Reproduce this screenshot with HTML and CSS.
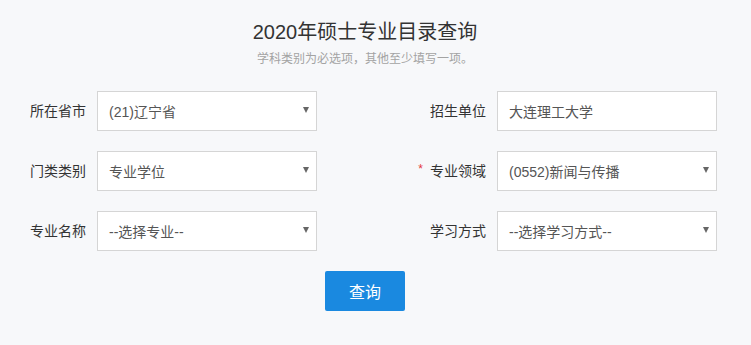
FILE: index.html
```html
<!DOCTYPE html>
<html lang="zh-CN">
<head>
<meta charset="utf-8">
<title>2020年硕士专业目录查询</title>
<link rel="stylesheet" href="styles.css">
</head>
<body>
<div class="page">
  <h1 class="title">2020年硕士专业目录查询</h1>
  <p class="subtitle">学科类别为必选项，其他至少填写一项。</p>
  <form class="form">
    <div class="row">
      <div class="field">
        <label class="label">所在省市</label>
        <div class="select"><span class="value">(21)辽宁省</span><span class="arrow"></span></div>
      </div>
      <div class="field">
        <label class="label">招生单位</label>
        <div class="input"><span class="value">大连理工大学</span></div>
      </div>
    </div>
    <div class="row">
      <div class="field">
        <label class="label">门类类别</label>
        <div class="select"><span class="value">专业学位</span><span class="arrow"></span></div>
      </div>
      <div class="field">
        <label class="label"><span class="req">*</span>专业领域</label>
        <div class="select"><span class="value">(0552)新闻与传播</span><span class="arrow"></span></div>
      </div>
    </div>
    <div class="row">
      <div class="field">
        <label class="label">专业名称</label>
        <div class="select"><span class="value">--选择专业--</span><span class="arrow"></span></div>
      </div>
      <div class="field">
        <label class="label">学习方式</label>
        <div class="select"><span class="value">--选择学习方式--</span><span class="arrow"></span></div>
      </div>
    </div>
    <div class="actions">
      <button type="button" class="btn">查询</button>
    </div>
  </form>
</div>
</body>
</html>
```

FILE: styles.css
```css
html, body {
  margin: 0;
  padding: 0;
  background: #f7f8fa;
}
body {
  font-family: "Liberation Sans", "Noto Sans CJK SC", sans-serif;
  color: #333;
}
.page {
  width: 730px;
  padding-top: 18px;
}
.title {
  margin: 0;
  font-size: 20px;
  font-weight: normal;
  line-height: 28px;
  text-align: center;
  color: #333;
}
.subtitle {
  margin: 4px 0 0;
  font-size: 12px;
  line-height: 18px;
  text-align: center;
  color: #a3a3a3;
}
.form {
  margin-top: 23px;
}
.row {
  display: flex;
  gap: 83px;
  margin-bottom: 20px;
}
.field {
  display: flex;
  align-items: center;
}
.label {
  width: 86px;
  padding-right: 11px;
  text-align: right;
  font-size: 14px;
  line-height: 20px;
  color: #333;
}
.req {
  color: #e4393c;
  font-size: 12px;
  margin-right: 7px;
  position: relative;
  top: -3px;
}
.select, .input {
  box-sizing: border-box;
  width: 220px;
  height: 40px;
  background: #fff;
  border: 1px solid #d5d5d5;
  display: flex;
  align-items: center;
  padding: 0 7px 0 11px;
  font-size: 14px;
  color: #555;
}
.value {
  line-height: 20px;
  padding-top: 1px;
}
.arrow {
  margin-left: auto;
  width: 0;
  height: 0;
  border-left: 3px solid transparent;
  border-right: 3px solid transparent;
  border-top: 6px solid #666;
  margin-top: -2px;
}
.actions {
  padding-left: 325px;
}
.btn {
  width: 80px;
  height: 40px;
  border: 0;
  border-radius: 2px;
  background: #1a89e0;
  color: #fff;
  font-family: "Liberation Sans", "Noto Sans CJK SC", sans-serif;
  font-size: 16px;
  cursor: pointer;
  padding: 0;
}
```
